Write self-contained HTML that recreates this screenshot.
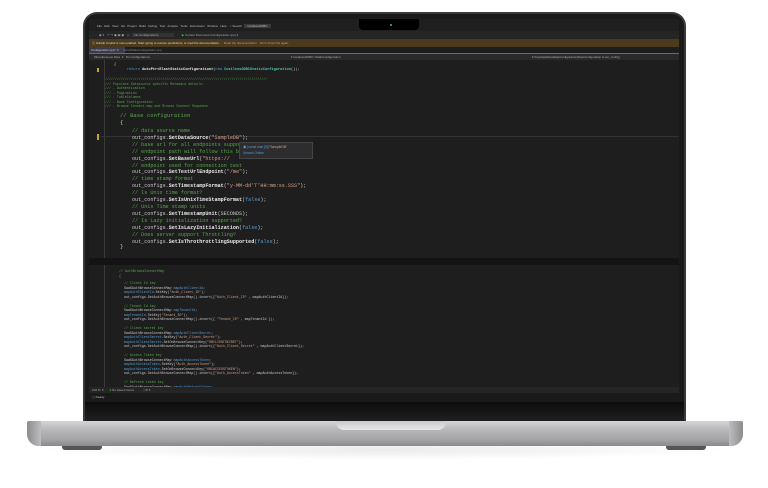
<!DOCTYPE html>
<html><head><meta charset="utf-8"><style>
*{margin:0;padding:0;box-sizing:border-box}
body{width:768px;height:488px;background:#fff;position:relative;overflow:hidden;font-family:"Liberation Sans",sans-serif}
.a{position:absolute}
.lid{left:83px;top:12px;width:603px;height:412px;background:#1a1a1a;border-radius:14px 14px 0 0;border:2px solid #3a3a3a;border-bottom:none}
.scr{left:89px;top:19px;width:590px;height:383px;background:#1e1e1e;overflow:hidden}
.mono{font-family:"Liberation Mono",monospace;white-space:pre;position:absolute}
.c{color:#57a64a}.m{color:#e8e8e8;font-weight:bold}.s{color:#d69d85}.k{color:#569cd6}.t{color:#c8c8c8}
.big{font-size:5.1px;line-height:6.9px;left:43px;top:109px}
.sm{font-size:3.3px;line-height:4.5px}
</style></head><body>
<div class="a" style="left:30px;top:440px;width:710px;height:20px;background:radial-gradient(ellipse at center,rgba(0,0,0,0.08),rgba(0,0,0,0) 70%)"></div>
<div class="a lid"></div>
<div class="a scr">
 <div class="a" style="left:0;top:0;width:590px;height:12px;background:#1f1f1f"></div>
 <div class="a" style="left:8px;top:5px;font-size:3px;color:#bbb;white-space:nowrap">File &nbsp; Edit &nbsp; View &nbsp; Git &nbsp; Project &nbsp; Build &nbsp; Debug &nbsp; Test &nbsp; Analyze &nbsp; Tools &nbsp; Extensions &nbsp; Window &nbsp; Help &nbsp;&nbsp; ⌕ Search &nbsp; <span style="background:#3a3a3a;padding:0 3px">CostlessODBC</span></div>
 <div class="a" style="left:270px;top:0;width:60px;height:11px;background:#000;border-radius:0 0 4px 4px"></div>
 <div class="a" style="left:301px;top:5px;width:2px;height:2px;background:#2c6;border-radius:1px"></div>
 <div class="a" style="left:0;top:12px;width:590px;height:8px;background:#252526"></div>
 <div class="a" style="left:10px;top:14px;font-size:3px;color:#aaa;white-space:nowrap">◉ ▾ &nbsp;&nbsp; ↶ ↷ ▣ ▣ ▣ &nbsp;&nbsp; ▷ &nbsp; <span style="background:#333;padding:0 16px 0 2px">No Configurations</span> &nbsp;&nbsp;&nbsp;&nbsp;&nbsp;&nbsp;&nbsp; <span style="color:#3c3">▶</span> Current Document (Configuration.cpp) ▾</div>
 <div class="a" style="left:0;top:20px;width:590px;height:8px;background:#4b3b1c"></div>
 <div class="a" style="left:3px;top:22px;font-size:3px;color:#ddd;white-space:nowrap">ⓘ GitHub Copilot is now enabled. Start typing to receive predictions, or read the documentation. &nbsp;&nbsp;&nbsp; <span style="color:#b9a">Read the documentation &nbsp;&nbsp; Don't show this again</span></div>
 <div class="a" style="left:0;top:28px;width:590px;height:6px;background:#1e1e1e"></div>
 <div class="a" style="left:0;top:28px;width:36px;height:6px;background:#3a3a4a"></div>
 <div class="a" style="left:2px;top:29px;font-size:3px;color:#ccc;white-space:nowrap">Configuration.cpp* ✕ &nbsp;&nbsp;&nbsp; <span style="color:#888">StructStateConfiguration.cpp</span></div>
 <div class="a" style="left:0;top:34px;width:590px;height:1px;background:#6b5bbd"></div>
 <div class="a" style="left:0;top:35px;width:590px;height:6px;background:#2a2a2a"></div>
 <div class="a" style="left:5px;top:36px;font-size:3px;color:#aaa;white-space:nowrap">Miscellaneous Files &nbsp;▾ &nbsp; No Configurations</div>
 <div class="a" style="left:202px;top:36px;font-size:3px;color:#aaa;white-space:nowrap">▾ CostlessODBC::StaticConfiguration</div>
 <div class="a" style="left:443px;top:36px;font-size:3px;color:#aaa;white-space:nowrap">▾ PopulateMetaDataConfiguration(DasConfiguration &amp; out_config)</div>
 <div class="a" style="left:15px;top:41px;width:1px;height:335px;background:#3a3a3a"></div>
 <div class="mono" style="font-size:3.6px;left:25px;top:44px;line-height:5px"><span class="t">{</span>
      <span class="k">return</span> <span class="m">AutoPtr&lt;ElastStaticConfiguration&gt;</span><span class="t">(</span><span class="k">new</span> <span class="m" style="color:#4ec9b0">CostlessODBCStaticConfiguration</span><span class="t">());</span>
</div>
 <div class="a" style="left:8px;top:49px;width:2px;height:4px;background:#c9a227"></div>
 <div class="mono sm" style="left:16px;top:58px"><span class="c">//////////////////////////////////////////////////////////////////////////////////
/// Populate Datasource specific Metadata details:
/// - Authentication
/// - Pagination
/// - TableColumns
/// - Base Configuration
/// - Browse Connect map and Browse Connect Sequence</span></div>
 <div class="mono" style="left:31px;top:93px;font-size:5.6px;line-height:7px"><span class="c">// Base configuration</span>
<span class="t">{</span></div>
 <div class="a" style="left:8px;top:115px;width:2px;height:6px;background:#c9a227"></div>
 <div class="a" style="left:12px;top:117px;width:578px;height:1px;background:#333"></div>
 <div class="mono big"><span class="c">// data source name</span>
<span class="t">out_configs.</span><span class="m">SetDataSource</span><span class="t">(</span><span class="s">"SampleDB"</span><span class="t">);</span>
<span class="c">// base url for all endpoints suppo</span>
<span class="c">// endpoint path will follow this b</span>
<span class="t">out_configs.</span><span class="m">SetBaseUrl</span><span class="t">(</span><span class="s">"https://<HC</span>
<span class="c">// endpoint used for connection test</span>
<span class="t">out_configs.</span><span class="m">SetTestUrlEndpoint</span><span class="t">(</span><span class="s">"/me"</span><span class="t">);</span>
<span class="c">// time stamp format</span>
<span class="t">out_configs.</span><span class="m">SetTimestampFormat</span><span class="t">(</span><span class="s">"y-MM-dd'T'HH:mm:ss.SSS"</span><span class="t">);</span>
<span class="c">// Is Unix time format?</span>
<span class="t">out_configs.</span><span class="m">SetIsUnixTimeStampFormat</span><span class="t">(</span><span class="k">false</span><span class="t">);</span>
<span class="c">// Unix Time stamp units</span>
<span class="t">out_configs.</span><span class="m">SetTimestampUnit</span><span class="t">(SECONDS);</span>
<span class="c">// Is Lazy initialization supported?</span>
<span class="t">out_configs.</span><span class="m">SetIsLazyInitialization</span><span class="t">(</span><span class="k">false</span><span class="t">);</span>
<span class="c">// Does server support Throttling?</span>
<span class="t">out_configs.</span><span class="m">SetIsThrothrottlingSupported</span><span class="t">(</span><span class="k">false</span><span class="t">);</span></div>
 <div class="mono" style="left:31px;top:224px;font-size:5.6px"><span class="t">}</span></div>
 <div class="a" style="left:150px;top:123px;width:74px;height:17px;background:#2d2d30;border:1px solid #444"></div>
 <div class="a" style="left:154px;top:126px;font-size:3.3px;color:#569cd6;white-space:nowrap">▣ (const char [9])<span style="color:#d69d85">"SampleDB"</span></div>
 <div class="a" style="left:154px;top:132px;font-size:3.3px;color:#4a9ee0">Search Online</div>
 <div class="a" style="left:0;top:239px;width:590px;height:7px;background:#141414"></div>
 <div class="mono sm" style="left:30px;top:250px;color:#999"><span class="c">// AuthBrowseConnectMap</span>
{</div>
 <div class="mono sm" style="left:35px;top:262px"><span class="c">// Client Id key</span>
<span class="t">SaaSAuthBrowseConnectMap </span><span class="k">mapAuthClientId</span><span class="t">;</span>
<span class="k">mapAuthClientId</span><span class="t">.SetKey(</span><span class="s">"Auth_Client_ID"</span><span class="t">);</span>
<span class="t">out_configs.GetAuthBrowseConnectMap().insert({</span><span class="s">"Auth_Client_ID"</span><span class="t"> , mapAuthClientId});</span>

<span class="c">// Tenant Id key</span>
<span class="t">SaaSAuthBrowseConnectMap </span><span class="k">mapTenantId</span><span class="t">;</span>
<span class="k">mapTenantId</span><span class="t">.SetKey(</span><span class="s">"Tenant_ID"</span><span class="t">);</span>
<span class="t">out_configs.GetAuthBrowseConnectMap().insert({ </span><span class="s">"Tenant_ID"</span><span class="t"> , mapTenantId });</span>

<span class="c">// Client secret key</span>
<span class="t">SaaSAuthBrowseConnectMap </span><span class="k">mapAuthClientSecret</span><span class="t">;</span>
<span class="k">mapAuthClientSecret</span><span class="t">.SetKey(</span><span class="s">"Auth_Client_Secret"</span><span class="t">);</span>
<span class="k">mapAuthClientSecret</span><span class="t">.SetOnBrowseConnectKey(</span><span class="s">"OBCLIENTSECRET"</span><span class="t">);</span>
<span class="t">out_configs.GetAuthBrowseConnectMap().insert({</span><span class="s">"Auth_Client_Secret"</span><span class="t"> , mapAuthClientSecret});</span>

<span class="c">// Access Token key</span>
<span class="t">SaaSAuthBrowseConnectMap </span><span class="k">mapAuthAccessToken</span><span class="t">;</span>
<span class="k">mapAuthAccessToken</span><span class="t">.SetKey(</span><span class="s">"Auth_AccessToken"</span><span class="t">);</span>
<span class="k">mapAuthAccessToken</span><span class="t">.SetOnBrowseConnectKey(</span><span class="s">"OBCACCESSTOKEN"</span><span class="t">);</span>
<span class="t">out_configs.GetAuthBrowseConnectMap().insert({</span><span class="s">"Auth_AccessToken"</span><span class="t"> , mapAuthAccessToken});</span>

<span class="c">// Refresh token key</span>
<span class="t">SaaSAuthBrowseConnectMap </span><span class="k">mapAuthRefreshToken</span><span class="t">;</span></div>
 <div class="a" style="left:0;top:368px;width:590px;height:6px;background:#252526"></div>
 <div class="a" style="left:3px;top:369px;font-size:3px;color:#aaa;white-space:nowrap">100 % &nbsp;▾ &nbsp;&nbsp;&nbsp;&nbsp;&nbsp; <span style="color:#3c3">●</span> No issues found &nbsp;&nbsp;&nbsp;&nbsp;&nbsp;&nbsp;&nbsp;&nbsp;&nbsp;&nbsp; | ⚙ ▾</div>
 <div class="a" style="left:0;top:374px;width:590px;height:9px;background:#1a1a1a"></div>
 <div class="a" style="left:3px;top:376px;font-size:3px;color:#bbb">▢ Ready</div>
</div>
<div class="a" style="left:85px;top:402px;width:599px;height:20px;background:linear-gradient(#0c0c0c,#202020)"></div>
<div class="a" style="left:27px;top:421px;width:716px;height:25px;border-radius:2px 2px 12px 12px;background:linear-gradient(#d4d4d6 0%,#b8b8ba 35%,#a4a4a6 75%,#8a8a8c 100%)"></div>
<div class="a" style="left:27px;top:421px;width:14px;height:25px;border-radius:2px 0 0 12px;background:linear-gradient(90deg,#8c8c8e,#bdbdbf)"></div>
<div class="a" style="left:729px;top:421px;width:14px;height:25px;border-radius:0 2px 12px 0;background:linear-gradient(90deg,#bdbdbf,#8c8c8e)"></div>
<div class="a" style="left:336px;top:421px;width:110px;height:9px;border-radius:0 0 8px 8px;background:linear-gradient(#c8c8ca,#e8e8ea)"></div>
<div class="a" style="left:62px;top:446px;width:40px;height:4px;border-radius:0 0 3px 3px;background:#555"></div>
<div class="a" style="left:666px;top:446px;width:40px;height:4px;border-radius:0 0 3px 3px;background:#555"></div>
</body></html>
